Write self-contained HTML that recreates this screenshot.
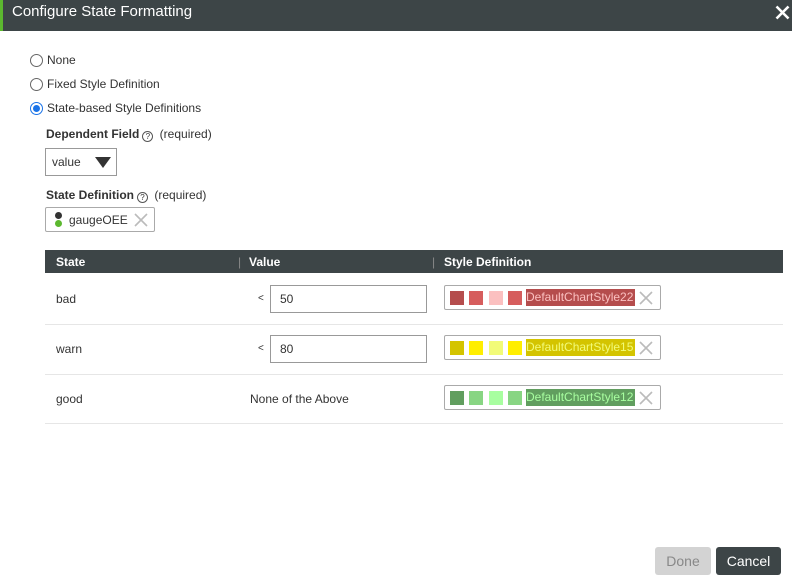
<!DOCTYPE html>
<html><head><style>
*{box-sizing:border-box;margin:0;padding:0}
body{width:792px;height:577px;background:#fff;font-family:"Liberation Sans",Arial,sans-serif;font-size:12px;color:#333;position:relative;overflow:hidden}
.a{position:absolute}
.hdr{left:0;top:0;width:792px;height:31px;background:#3d4547;border-left:3px solid #5cb82f}
.radio{width:13px;height:13px;border:1px solid #666;border-radius:50%;background:#fff}
.lbl{font-size:12px;color:#333}
.b{font-weight:bold;color:#333}
.q{display:inline-block;width:11px;height:11px;border:1px solid #555;border-radius:50%;font-size:8px;text-align:center;line-height:9px;vertical-align:-1px;margin:0 3px}
.th{top:250px;left:45px;width:738px;height:23px;background:#3d4547;color:#fff;font-weight:bold;font-size:12px}
.line{left:45px;width:738px;height:1px;background:#e6e6e6}
.inp{width:157px;height:28px;border:1px solid #999;padding-left:9px;line-height:26px;font-size:12px}
.sbox{left:444px;width:217px;height:25px;border:1px solid #aaa;border-radius:2px}
.sw{position:absolute;top:5px;width:14px;height:14px}
.sl{position:absolute;left:81px;top:3px;height:17px;width:109px;font-size:12px;line-height:17px}
.x{position:absolute;left:194px;top:5px}
</style></head><body>
<div class="a hdr"></div>
<div class="a" style="left:12px;top:3px;color:#fff;font-size:15px;line-height:18px">Configure State Formatting</div>
<svg class="a" style="left:775px;top:5px" width="15" height="15"><path d="M1.5 1.5L13.5 13.5M13.5 1.5L1.5 13.5" stroke="#fff" stroke-width="2.6"/></svg>

<div class="a radio" style="left:30px;top:54px"></div><div class="a lbl" style="left:47px;top:53px">None</div>
<div class="a radio" style="left:30px;top:78px"></div><div class="a lbl" style="left:47px;top:77px">Fixed Style Definition</div>
<div class="a radio" style="left:30px;top:102px;border-color:#1a73e8"><div style="margin:2px;width:7px;height:7px;border-radius:50%;background:#1a73e8"></div></div><div class="a lbl" style="left:47px;top:101px">State-based Style Definitions</div>

<div class="a" style="left:46px;top:127px"><span class="b">Dependent Field</span><span class="q">?</span> (required)</div>
<div class="a" style="left:45px;top:148px;width:72px;height:28px;border:1px solid #999;padding-left:6px;line-height:26px">value<svg style="position:absolute;left:49px;top:8px" width="16" height="11"><path d="M0 0H16L8 11Z" fill="#333"/></svg></div>

<div class="a" style="left:46px;top:188px"><span class="b">State Definition</span><span class="q">?</span> (required)</div>
<div class="a" style="left:45px;top:207px;width:110px;height:25px;border:1px solid #aaa;border-radius:2px">
<div class="a" style="left:9px;top:4px;width:7px;height:7px;border-radius:50%;background:#333"></div>
<div class="a" style="left:9px;top:12px;width:7px;height:7px;border-radius:50%;background:#5cb82f"></div>
<div class="a" style="left:23px;top:5px">gaugeOEE</div>
<svg class="a" style="left:88px;top:5px" width="14" height="14"><path d="M1 1L13 13M13 1L1 13" stroke="#bbb" stroke-width="1.6"/></svg></div>

<div class="a th"><span class="a" style="left:11px;top:5px">State</span><span class="a" style="left:193px;top:5px;color:#888;font-weight:normal">|</span><span class="a" style="left:204px;top:5px">Value</span><span class="a" style="left:387px;top:5px;color:#888;font-weight:normal">|</span><span class="a" style="left:399px;top:5px">Style Definition</span></div>

<div class="a" style="left:56px;top:292px">bad</div>
<div class="a" style="left:258px;top:293px;font-size:10px">&lt;</div>
<div class="a inp" style="left:270px;top:285px">50</div>
<div class="a line" style="top:324px"></div>
<div class="a" style="left:56px;top:342px">warn</div>
<div class="a" style="left:258px;top:343px;font-size:10px">&lt;</div>
<div class="a inp" style="left:270px;top:335px">80</div>
<div class="a line" style="top:374px"></div>
<div class="a" style="left:56px;top:392px">good</div>
<div class="a" style="left:250px;top:392px">None of the Above</div>
<div class="a line" style="top:423px"></div>

<div class="a sbox" style="top:285px"><div class="sw" style="left:5px;background:#b54d4d"></div><div class="sw" style="left:24px;background:#d65d5d"></div><div class="sw" style="left:44px;background:#fbc0c0"></div><div class="sw" style="left:63px;background:#d65d5d"></div><div class="sl" style="background:#b54d4d;color:#fbc0c0">DefaultChartStyle22</div><svg class="x" width="14" height="14"><path d="M1 1L13 13M13 1L1 13" stroke="#bbb" stroke-width="1.6"/></svg></div>
<div class="a sbox" style="top:335px"><div class="sw" style="left:5px;background:#d4c400"></div><div class="sw" style="left:24px;background:#ffee00"></div><div class="sw" style="left:44px;background:#f2fb78"></div><div class="sw" style="left:63px;background:#ffee00"></div><div class="sl" style="background:#d4c400;color:#f2fb78">DefaultChartStyle15</div><svg class="x" width="14" height="14"><path d="M1 1L13 13M13 1L1 13" stroke="#bbb" stroke-width="1.6"/></svg></div>
<div class="a sbox" style="top:385px"><div class="sw" style="left:5px;background:#619e5f"></div><div class="sw" style="left:24px;background:#88d583"></div><div class="sw" style="left:44px;background:#a8fea0"></div><div class="sw" style="left:63px;background:#88d583"></div><div class="sl" style="background:#619e5f;color:#a8fea0">DefaultChartStyle12</div><svg class="x" width="14" height="14"><path d="M1 1L13 13M13 1L1 13" stroke="#bbb" stroke-width="1.6"/></svg></div>

<div class="a" style="left:655px;top:547px;width:56px;height:28px;background:#d3d3d3;border-radius:3px;color:#888;font-size:14px;text-align:center;line-height:28px">Done</div>
<div class="a" style="left:716px;top:547px;width:65px;height:28px;background:#3d4547;border-radius:3px;color:#fff;font-size:14px;text-align:center;line-height:28px">Cancel</div>
</body></html>
